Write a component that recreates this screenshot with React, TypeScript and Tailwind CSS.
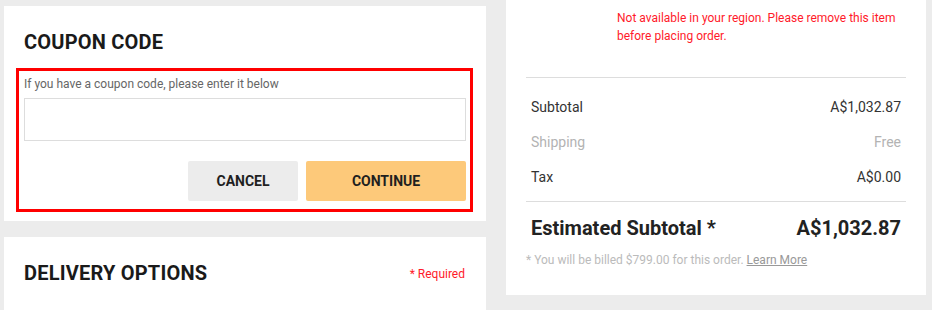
import React from 'react';

const rows = [
  { label: 'Subtotal', value: 'A$1,032.87', muted: false },
  { label: 'Shipping', value: 'Free', muted: true },
  { label: 'Tax', value: 'A$0.00', muted: false },
];

export default function App() {
  return (
    <div
      className="flex h-[310px] w-[932px] overflow-hidden bg-[#ececec] text-[#333]"
      style={{ fontFamily: 'Roboto, "Liberation Sans", sans-serif' }}
    >
      {/* left column */}
      <div className="ml-1 flex w-[482px] flex-col gap-4 pt-[6px]">
        <section className="bg-white pt-[22px] pr-[13px] pb-[9px] pl-3">
          <h2 className="px-2 text-[20px] font-bold leading-[28px] tracking-[0.2px] text-[#1a1a1a]">COUPON CODE</h2>
          <div className="mt-3 border-[3px] border-[#ff0000] pt-[5px] pr-1 pb-2 pl-[5px]">
            <label className="block text-[12px] leading-4 text-[#666]">
              If you have a coupon code, please enter it below
            </label>
            <input
              type="text"
              className="mt-[6px] block h-[43px] w-full border border-[#dddddd] px-3 text-sm outline-none"
            />
            <div className="mt-5 flex justify-end gap-2">
              <button className="h-10 w-[110px] rounded-[2px] bg-[#ececec] text-[14px] font-bold text-[#1f1f1f]">
                CANCEL
              </button>
              <button className="h-10 w-[160px] rounded-[2px] bg-[#fdc97a] text-[14px] font-bold text-[#1f1f1f]">
                CONTINUE
              </button>
            </div>
          </div>
        </section>

        <section className="h-[120px] bg-white pt-[22px] pr-[21px] pl-5">
          <div className="flex items-center justify-between">
            <h2 className="text-[20px] font-bold leading-[28px] tracking-[0.2px] text-[#1a1a1a]">DELIVERY OPTIONS</h2>
            <span className="pt-[2px] text-[12px] text-[#ff1a2a]">* Required</span>
          </div>
        </section>
      </div>

      {/* order summary */}
      <aside className="ml-5 h-[295px] w-[420px] bg-white px-5">
        <div className="flex justify-end pt-[9px]">
          <p className="w-[289px] text-[12px] leading-[18px] text-[#ff1a2a]">
            Not available in your region. Please remove this item before placing order.
          </p>
        </div>

        <div className="mt-[32px] border-t border-[#dddddd] pt-3 pb-[6px]">
          {rows.map((r) => (
            <div
              key={r.label}
              className={
                'flex h-[35px] items-center justify-between px-[5px] text-[14px] ' +
                (r.muted ? 'text-[#b3b3b3]' : 'text-[#333]')
              }
            >
              <span>{r.label}</span>
              <span>{r.value}</span>
            </div>
          ))}
        </div>

        <div className="border-t border-[#dddddd] pt-3">
          <div className="flex justify-between px-[5px] text-[20px] font-bold leading-[28px] text-[#222]">
            <span>Estimated Subtotal *</span>
            <span>A$1,032.87</span>
          </div>
          <p className="mt-[10px] text-[12px] leading-4 text-[#bbbbbb]">
            * You will be billed $799.00 for this order.{' '}
            <a className="text-[#999] underline">Learn More</a>
          </p>
        </div>
      </aside>
    </div>
  );
}
